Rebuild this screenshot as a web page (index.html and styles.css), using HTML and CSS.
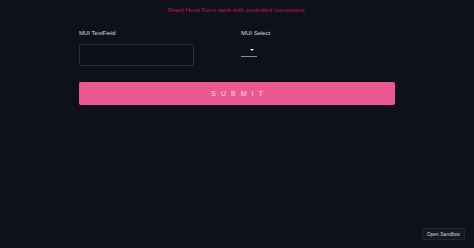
FILE: index.html
```html
<!DOCTYPE html>
<html>
<head>
<meta charset="utf-8">
<link rel="stylesheet" href="styles.css">
</head>
<body>
<h1 class="title">React Hook Form work with controlled component.</h1>
<form class="form">
  <div class="row">
    <div class="field">
      <label class="label">MUI TextField</label>
      <div class="textfield"></div>
    </div>
    <div class="field">
      <label class="label">MUI Select</label>
      <div class="select">
        <span class="arrow"></span>
      </div>
    </div>
  </div>
  <button type="button" class="submit">SUBMIT</button>
</form>
<a class="sandbox">Open Sandbox</a>
</body>
</html>
```
FILE: styles.css
```css
html, body {
  margin: 0;
  padding: 0;
  background: #0e101c;
  height: 100%;
  font-family: "Liberation Sans", Arial, sans-serif;
}
.title {
  margin: 0;
  padding-top: 6px;
  font-size: 6.2px;
  line-height: 8px;
  font-weight: 400;
  color: #bf1650;
  text-align: center;
}
.form {
  width: 316px;
  margin: 15px auto 0;
}
.row {
  display: grid;
  grid-template-columns: 1fr 1fr;
  column-gap: 8px;
}
.field {
  display: flex;
  flex-direction: column;
  align-items: flex-start;
}
.label {
  font-family: "Liberation Sans", Arial, sans-serif;
  font-weight: 400;
  font-size: 6px;
  line-height: 8px;
  color: #dcdce2;
  margin-bottom: 7px;
}
.textfield {
  box-sizing: border-box;
  width: 115px;
  height: 22px;
  border: 1px solid #2e313c;
  border-radius: 2px;
  background: #0c0e18;
}
.select {
  box-sizing: border-box;
  width: 16px;
  height: 13px;
  border-bottom: 1px solid #8a8b92;
  display: flex;
  justify-content: flex-end;
  align-items: center;
  padding-right: 3px;
}
.arrow {
  width: 0;
  height: 0;
  border-left: 2px solid transparent;
  border-right: 2px solid transparent;
  border-top: 2px solid #f0f0f0;
}
.submit {
  display: block;
  width: 316px;
  height: 23px;
  margin-top: 16px;
  border: none;
  border-radius: 2px;
  background: #ec5990;
  color: #fbe3ec;
  font-family: "Liberation Sans", Arial, sans-serif;
  font-size: 7px;
  letter-spacing: 5px;
  padding: 0 0 0 5px;
  text-align: center;
}
.sandbox {
  position: fixed;
  right: 9px;
  bottom: 8px;
  box-sizing: border-box;
  height: 12px;
  padding: 0 4px;
  display: flex;
  align-items: center;
  font-size: 5px;
  color: #d8d8dc;
  background: #161821;
  border: 1px solid #24262f;
  border-radius: 2px;
}
```
